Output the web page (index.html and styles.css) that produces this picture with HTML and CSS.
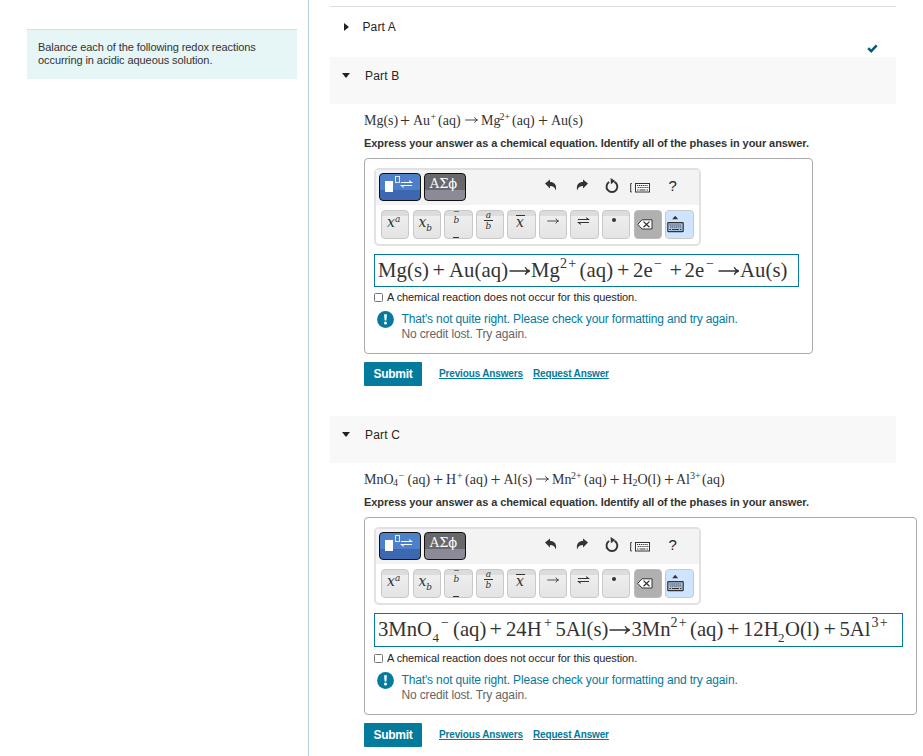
FILE: index.html
```html
<!DOCTYPE html>
<html lang="en">
<head>
<meta charset="utf-8">
<title>Balancing redox reactions</title>
<link rel="stylesheet" href="styles.css">
</head>
<body>
<svg class="defs" aria-hidden="true">
  <symbol id="undo" viewBox="0 0 12 12"><path d="M0 4.600 5 .4v2.500c4.300 0 7 2.600 5.900 8.600C10 8.500 8 7.100 5 7.100v2.400z"/></symbol>
  <symbol id="reset" viewBox="0 0 14 16"><path d="M9.500 3.900A5.400 5.400 0 1 1 4.200 4" fill="none" stroke="#333" stroke-width="1.900"/><path d="M5.600 0 10.200 3 5.900 6.200z"/></symbol>
  <symbol id="keyboard" viewBox="0 0 20 12"><path d="M1.800 1.500H.7v8.500h1.100" fill="none" stroke="#333" stroke-width="1"/><rect x="5.500" y="1.500" width="14" height="8.500" fill="#fff" stroke="#333"/><path d="M7 3.500h11M7.700 5.500h11" stroke="#333" stroke-dasharray="1.200 .7"/><path d="M7 8h1.500m1 0h6m1 0H18" stroke="#333"/></symbol>
  <symbol id="keypad" viewBox="0 0 17 18"><path d="M5.200 4.200 8.200.800l3 3.400z"/><rect x=".8" y="7.700" width="15.400" height="9" rx=".6" fill="#aac4df" stroke="#333" stroke-width="1.200"/><path d="M2.500 10h12M3.200 12h11" stroke="#333" stroke-dasharray="1.200 .8"/><path d="M2.500 14.500H4m1 0h7m1 0h1.500" stroke="#333"/></symbol>
  <symbol id="erase" viewBox="0 0 16 11"><path d="M5 .8h10v9.200H5L.8 5.400z" fill="#fff" stroke="#333" stroke-width="1"/><path d="m6.500 2.600 6 5.700m0-5.700-6 5.700" stroke="#333" stroke-width="1.300"/></symbol>
  <symbol id="equil" viewBox="0 0 14 8"><path d="M1 2.500h11.500L9.800.4M13 5.500H1.300l2.700 2.200" fill="none" stroke="currentColor" stroke-width="1.100"/></symbol>
  <symbol id="arrow" viewBox="0 0 13 8"><path d="M.2 4h12M9.500 1.300Q10.500 3.500 12.500 4 10.500 4.500 9.500 6.700" fill="none" stroke="currentColor" stroke-width=".9"/></symbol>
  <symbol id="longarrow" viewBox="0 0 22 10"><path d="M.5 5h20M16.200 1.200Q17.500 4.300 20.800 5 17.500 5.700 16.200 8.800" fill="none" stroke="currentColor" stroke-width="1.300"/></symbol>
  <symbol id="alert" viewBox="0 0 17 17"><circle cx="8.500" cy="8.500" r="8.400" fill="#047a9c"/><path d="M7.100 3.300h2.800l-.5 6.200H7.600z" fill="#fff"/><circle cx="8.500" cy="12" r="1.500" fill="#fff"/></symbol>
  <symbol id="tick" viewBox="0 0 11 9"><path d="m1.200 4.100 3 3 5.500-5.700" fill="none" stroke="#065b77" stroke-width="2.500"/></symbol>
</svg>
<div class="page">
  <aside class="side"><p class="intro">Balance each of the following redox reactions<br>occurring in acidic aqueous solution.</p></aside>
  <main class="main">
    <header class="part-a"><i class="tri right"></i><span>Part A</span><svg class="tick"><use href="#tick"/></svg></header>

    <section class="part">
      <header class="part-head"><i class="tri down"></i><span>Part B</span></header>
      <div class="body">
        <div class="eq eq-b"><span>Mg(s)</span><span class="op">+</span><span>Au</span><span class="sup">+</span><span>(aq)</span><svg><use href="#arrow"/></svg><span>Mg</span><span class="sup">2+</span><span>(aq)</span><span class="op">+</span><span>Au(s)</span></div>
        <p class="instruction">Express your answer as a chemical equation. Identify all of the phases in your answer.</p>
        <div class="answer answer-b">
          <div class="toolbar">
            <div class="tools">
              <button class="tab blue"><i class="box"></i><i class="exp"></i><svg><use href="#equil"/></svg></button><button class="tab gray">ΑΣϕ</button>
              <div class="actions"><svg class="undo"><use href="#undo"/></svg><svg class="undo redo"><use href="#undo"/></svg><svg class="reset"><use href="#reset"/></svg><svg class="kb"><use href="#keyboard"/></svg><span class="help">?</span></div>
            </div>
            <div class="keys">
              <button class="key"><span class="x">x<sup>a</sup></span></button><button class="key"><span class="x">x<sub>b</sub></span></button><button class="key"><span class="stack"><b class="clip"></b><span>b</span><i></i></span></button><button class="key"><span class="frac"><span>a</span><span>b</span></span></button><button class="key"><span class="bar">x</span></button><button class="key"><svg class="k-arrow"><use href="#arrow"/></svg></button><button class="key"><svg class="k-equil"><use href="#equil"/></svg></button><button class="key"><i class="dot"></i></button><button class="key erase"><svg><use href="#erase"/></svg></button><button class="key pad"><svg><use href="#keypad"/></svg></button>
            </div>
          </div>
          <div class="field field-b"><span>Mg(s)</span><span class="op">+</span><span>Au(aq)</span><svg><use href="#longarrow"/></svg><span>Mg</span><span class="sup">2+</span><span>(aq)</span><span class="op">+</span><span>2e</span><span class="sup">−</span><span class="op">+</span><span>2e</span><span class="sup">−</span><svg><use href="#longarrow"/></svg><span>Au(s)</span></div>
          <label class="none"><input type="checkbox">A chemical reaction does not occur for this question.</label>
          <div class="feedback"><svg><use href="#alert"/></svg><p>That's not quite right. Please check your formatting and try again.<br><span>No credit lost. Try again.</span></p></div>
        </div>
        <div class="submit-row"><button class="submit">Submit</button><a>Previous Answers</a><a>Request Answer</a></div>
      </div>
    </section>

    <section class="part">
      <header class="part-head"><i class="tri down"></i><span>Part C</span></header>
      <div class="body">
        <div class="eq eq-c"><span>MnO</span><span class="sub">4</span><span class="sup">−</span><span>(aq)</span><span class="op">+</span><span>H</span><span class="sup">+</span><span>(aq)</span><span class="op">+</span><span>Al(s)</span><svg><use href="#arrow"/></svg><span>Mn</span><span class="sup">2+</span><span>(aq)</span><span class="op">+</span><span>H</span><span class="sub">2</span><span>O(l)</span><span class="op">+</span><span>Al</span><span class="sup">3+</span><span>(aq)</span></div>
        <p class="instruction">Express your answer as a chemical equation. Identify all of the phases in your answer.</p>
        <div class="answer answer-c">
          <div class="toolbar">
            <div class="tools">
              <button class="tab blue"><i class="box"></i><i class="exp"></i><svg><use href="#equil"/></svg></button><button class="tab gray">ΑΣϕ</button>
              <div class="actions"><svg class="undo"><use href="#undo"/></svg><svg class="undo redo"><use href="#undo"/></svg><svg class="reset"><use href="#reset"/></svg><svg class="kb"><use href="#keyboard"/></svg><span class="help">?</span></div>
            </div>
            <div class="keys">
              <button class="key"><span class="x">x<sup>a</sup></span></button><button class="key"><span class="x">x<sub>b</sub></span></button><button class="key"><span class="stack"><b class="clip"></b><span>b</span><i></i></span></button><button class="key"><span class="frac"><span>a</span><span>b</span></span></button><button class="key"><span class="bar">x</span></button><button class="key"><svg class="k-arrow"><use href="#arrow"/></svg></button><button class="key"><svg class="k-equil"><use href="#equil"/></svg></button><button class="key"><i class="dot"></i></button><button class="key erase"><svg><use href="#erase"/></svg></button><button class="key pad"><svg><use href="#keypad"/></svg></button>
            </div>
          </div>
          <div class="field field-c"><span>3MnO</span><span class="sub">4</span><span class="sup">−</span><span>(aq)</span><span class="op">+</span><span>24H</span><span class="sup">+</span><span>5Al(s)</span><svg><use href="#longarrow"/></svg><span>3Mn</span><span class="sup">2+</span><span>(aq)</span><span class="op">+</span><span>12H</span><span class="sub">2</span><span>O(l)</span><span class="op">+</span><span>5Al</span><span class="sup">3+</span></div>
          <label class="none"><input type="checkbox">A chemical reaction does not occur for this question.</label>
          <div class="feedback"><svg><use href="#alert"/></svg><p>That's not quite right. Please check your formatting and try again.<br><span>No credit lost. Try again.</span></p></div>
        </div>
        <div class="submit-row"><button class="submit">Submit</button><a>Previous Answers</a><a>Request Answer</a></div>
      </div>
    </section>
  </main>
</div>
</body>
</html>
```
FILE: styles.css
```css
* { box-sizing: border-box; }
body { margin: 0; height: 756px; overflow: hidden; background: #fff; color: #252525; font: 12px "Liberation Sans", Arial, sans-serif; }
p { margin: 0; }
button { padding: 0; margin: 0; font: inherit; }
svg { display: block; flex: none; fill: #333; overflow: visible; }
.defs { display: none; }
.page { display: flex; height: 756px; }
.side { width: 309px; flex: none; padding: 29px 0 0 27px; border-right: 1px solid #b9cddc; }
.intro { width: 270px; height: 50px; padding: 11px; background: #e6f5f5; border-top: 1px solid #d9dddd; font-size: 11px; line-height: 13px; letter-spacing: -.08px; color: #333; white-space: nowrap; }
.main { flex: 1; min-width: 0; padding: 6px 0 0 21px; }
.part-a { display: flex; width: 566px; height: 51px; padding: 13px 18px 0 14px; border-top: 1px solid #dedede; line-height: 14px; letter-spacing: .12px; }
.part-a span { margin-left: 13.500px; }
.tri { width: 0; height: 0; border: 4px solid transparent; }
.tri.right { border-width: 4px 0 4px 5px; border-left-color: #222; margin-top: 3px; }
.tri.down { border-width: 5px 4.500px 0; border-top-color: #222; margin-top: 4px; }
.tick { width: 11px; height: 9px; margin: 24px 0 0 auto; }
.part { height: 359px; }
.part-head { display: flex; width: 566px; height: 47px; background: #f8f8f8; padding: 12px 0 0 12px; line-height: 14px; letter-spacing: .2px; }
.part-head span { margin-left: 15px; }
.body { padding-left: 34px; }
.eq, .field { display: grid; align-items: baseline; white-space: nowrap; font-family: "Liberation Serif", serif; color: #333; }
.eq { height: 30px; padding-top: 6px; font-size: 14px; line-height: 18px; }
.eq-b { grid-template-columns: 36px 13px 17.500px 7.500px 27px 16px 18.500px 12.500px 26px 13px 32px; }
.eq-c { grid-template-columns: 29px 5.500px 9px 25.500px 13px 11px 8px 25.500px 13px 32.500px 16px 19px 13px 25.500px 13px 10px 5px 26.500px 12px 14px 12px 23px; }
.eq .op { font-size: 18px; line-height: 18px; position: relative; top: 2px; }
.eq .sup, .eq .sub { font-size: 10px; line-height: 10px; position: relative; top: -5px; }
.eq .sub { top: 2px; }
.eq svg { width: 13px; height: 8px; position: relative; top: -1px; }
.instruction { height: 24px; padding-top: 2px; font-size: 11px; line-height: 14px; font-weight: bold; color: #333; letter-spacing: -.08px; white-space: nowrap; }
.answer { height: 196px; padding: 9px; border: 1px solid #aaa; border-radius: 4px; }
.answer-b { width: 449px; }
.answer-c { width: 553px; height: 198px; }
.toolbar { width: 327px; height: 78px; border: 2px solid #e1e1e1; border-radius: 5px; background: #fff; }
.tools { display: flex; height: 35px; padding: 3px 0 0 3px; gap: 3px; background: #f3f3f3; }
.tab { display: flex; width: 42px; height: 28px; border: 1.500px solid #111; border-radius: 4px; color: #fff; }
.blue { padding: 7px 0 0 5px; background: linear-gradient(#4e80c9 0 60%, #3c67b1 60%); }
.blue .box { width: 8px; height: 11px; background: #fff; }
.blue .exp { width: 5px; height: 7px; border: 1px solid #dce8ff; margin: -5px 0 0 2px; }
.blue svg { width: 13px; height: 8px; margin-top: -1px; }
.gray { justify-content: center; padding: 1px 3px 0 0; background: linear-gradient(#68686c 0 60%, #8c8a96 60%); font: 13px/18px "DejaVu Serif", serif; }
.actions { display: flex; flex: 1; padding: 6px 0 0 76px; }
.undo { width: 12px; height: 12px; }
.redo { transform: scaleX(-1); margin-left: 19px; }
.reset { width: 14px; height: 16px; margin: -1px 0 0 17px; }
.kb { width: 20px; height: 12px; margin: 3px 0 0 11px; }
.help { font-size: 15px; line-height: 16px; margin: -1px 0 0 18.500px; }
.keys { display: flex; gap: 3.200px; padding: 5px 0 0 5px; }
.key { display: flex; justify-content: center; width: 28.400px; height: 29px; overflow: hidden; border: 1px solid #c8c8c8; border-radius: 4px; background: linear-gradient(#dcdcdc 0 5px, #eee 5px, #e4e4e4); color: #333; font: italic 16px/20px "DejaVu Serif", serif; }
.x { font-size: 14px; line-height: 20px; padding: 1px 3px 0 0; }
.x sup, .x sub { font-size: 9px; line-height: 0; }
.x sup { vertical-align: 5px; }
.x sub { vertical-align: -4px; }
.stack { display: flex; flex-direction: column; align-items: center; height: 27px; margin-right: 4px; font-size: 9px; line-height: 12px; }
.clip { height: 1px; width: 5px; background: #777; }
.stack span { padding-top: 2px; }
.stack i { width: 6px; height: 1px; background: #333; margin-top: auto; }
.frac { display: flex; flex-direction: column; font-size: 9px; line-height: 10px; text-align: center; width: 9px; margin: -1px 3px 0 0; }
.frac span:first-child { border-bottom: 1px solid #333; }
.bar { width: 9px; height: 14px; margin: 4px 3px 0 0; border-top: 1px solid #333; font-size: 14px; line-height: 12px; }
.k-arrow { width: 12px; height: 8px; margin-top: 6px; }
.k-equil { width: 13px; height: 8px; margin: 6px 3px 0 0; }
.dot { width: 4px; height: 4px; border-radius: 50%; background: #333; margin: 7px 4px 0 0; }
.erase { background: #b0b0b0; border-color: #bbb; }
.erase svg { width: 16px; height: 11px; margin: 8px 6px 0 0; }
.pad { background: #cfe5ff; }
.pad svg { width: 17px; height: 18px; margin: 4px 7px 0 0; }
.field { height: 33px; margin-top: 8px; padding: 3px 0 0 3px; border: 1px solid #047a9c; font-size: 20.700px; line-height: 24px; }
.field-b { width: 425px; grid-template-columns: 54.500px 16.500px 60px 22px 29px 19.500px 37.500px 16px 21px 15.500px 15px 21.500px 12px 22px 49px; letter-spacing: .1px; }
.field-c { width: 529px; height: 34px; grid-template-columns: 54.500px 8.500px 12px 36.500px 16.500px 38px 11.500px 53.500px 22.500px 39px 19.500px 37px 16px 35px 7px 38.500px 16px 32px 18px; }
.field .op { font-size: 22px; }
.field .sup, .field .sub { font-size: 14px; line-height: 14px; position: relative; top: -9px; letter-spacing: 1.300px; }
.field .sub { top: 6px; font-size: 13px; letter-spacing: 0; }
.field svg { width: 22px; height: 10px; position: relative; top: -1.500px; }
.none { display: flex; align-items: center; gap: 4px; height: 13px; margin-top: 4px; font-size: 11px; line-height: 13px; letter-spacing: -.08px; white-space: nowrap; }
.answer-c .none { margin-top: 5px; }
.none input { appearance: none; width: 9px; height: 9px; margin: 0; border: 1px solid #767676; border-radius: 1.500px; background: #fff; }
.feedback { display: flex; gap: 7.500px; margin: 7px 0 0 3px; color: #047a9c; line-height: 15px; letter-spacing: -.145px; white-space: nowrap; }
.feedback svg { width: 17px; height: 17px; }
.feedback p { padding-top: 1px; }
.feedback span { color: #656565; }
.submit-row { display: flex; align-items: center; height: 24px; margin-top: 8px; }
.submit { width: 58px; height: 24px; border: 0; border-radius: 1px; background: #047a9c; color: #fff; font-size: 12px; font-weight: bold; letter-spacing: -.3px; margin-right: 7px; }
.submit-row a { margin-left: 10px; font-size: 10px; line-height: 12px; font-weight: bold; letter-spacing: -.15px; color: #047a9c; text-decoration: underline; margin-top: -1px; }
```
